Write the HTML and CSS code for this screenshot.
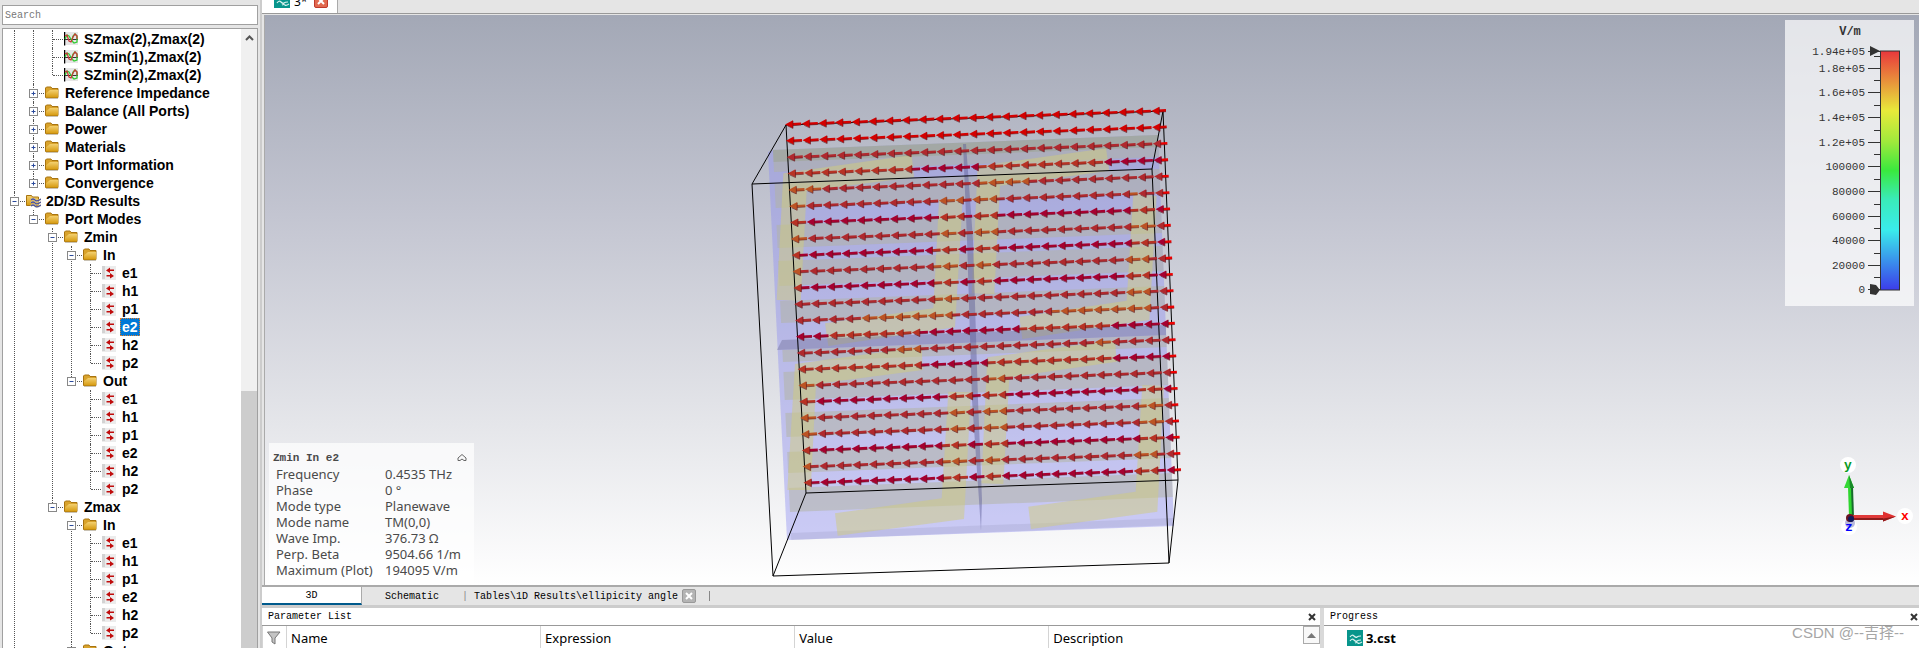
FILE: index.html
```html
<!DOCTYPE html>
<html lang="en">
  <head>
    <meta charset="UTF-8" />
    <meta name="viewport" content="width=device-width, initial-scale=1.0" />
    <title>3.cst</title>
    <link rel="stylesheet" href="styles.css">
  </head>
  <body>
    <svg class="defs" width="0" height="0">
      <defs>
        <linearGradient id="gold" x1="0" y1="0" x2="0" y2="1">
          <stop offset="0" stop-color="#f3d070" />
          <stop offset="1" stop-color="#d69a10" />
        </linearGradient>
        <symbol id="folder" viewBox="0 0 15 14">
          <path d="M0.5 11.5V2l1-1h4.500l1 1.500h6v9z" fill="#d9a32c" stroke="#a87410" />
          <path d="M1 11.500V7.500L5 4h8v7.500z" fill="url(#gold)" />
          <path d="M1 12.500h12" stroke="#c9c2b4" />
        </symbol>
        <symbol id="results" viewBox="0 0 15 14">
          <path d="M0.500 11.500V1.500h5l1 1.500h6v8.500z" fill="url(#gold)" stroke="#a87410" />
          <path d="M5 6q2-2 4 0t6-1M5 9q2-2 4 0t6-1M5 12q2-2 4 0t6-1" fill="none" stroke="#e9dfc0" stroke-width="2" />
          <path d="M5 6q2-2 4 0t6-1M5 9q2-2 4 0t6-1M5 12q2-2 4 0t6-1" fill="none" stroke="#4c5298" stroke-width="1.200" />
        </symbol>
        <symbol id="curve" viewBox="0 0 15 14">
          <rect x="1" width="13" height="13" fill="#e6e6e6" />
          <path d="M0.500 0v13.500" stroke="#000" stroke-width="1.500" />
          <path d="M1 7.500h13" stroke="#333" />
          <path d="M1 7l2-4 2 1 3 5 2 2 3-1V4l-2-2-2 2-1 4" fill="none" stroke="#3c3" stroke-width="1.300" />
          <path d="M1 4l2-1 2 6 2 1 2-5 2-3 2 2v3" fill="none" stroke="#c33" stroke-width="1.200" />
        </symbol>
        <symbol id="field" viewBox="0 0 15 14">
          <rect width="14" height="14" fill="#ececec" />
          <path d="M0 0h3v13H0z" fill="#d3d3d3" />
          <path d="M4 4.500l4-3v2h4V5H8v2zM12 10l-4-3v2H4.500v1.500H8v2z" fill="#c00c0c" />
        </symbol>
        <symbol id="wave" viewBox="0 0 16 16">
          <rect width="16" height="16" fill="#08958c" />
          <path d="M3 7q2-3 4-1t3 1 4-1M3 11q2-3 4-1t3 1 4-1M8 13q2-1 3 0t4-1" fill="none" stroke="#d9f2ef" stroke-width="1.200" />
        </symbol>
        <linearGradient id="ramp" x1="0" y1="0" x2="0" y2="1">
          <stop offset="0" stop-color="#e9373c" />
          <stop offset="0.250" stop-color="#e8ea3a" />
          <stop offset="0.380" stop-color="#9fe93c" />
          <stop offset="0.500" stop-color="#3ae93e" />
          <stop offset="0.620" stop-color="#3aebb8" />
          <stop offset="0.750" stop-color="#3aecec" />
          <stop offset="0.880" stop-color="#3a90ec" />
          <stop offset="1" stop-color="#3c3cea" />
        </linearGradient>
      </defs>
    </svg>

    <div class="app">
      <aside class="sidebar">
        <input class="search" type="text" placeholder="Search" aria-label="Search" />
        <div class="tree-box">
          <ul class="tree" id="tree"></ul>
          <div class="scrollbar">
            <svg width="9" height="6" viewBox="0 0 9 6"><path d="M1 5l3.500-3.500L8 5" fill="none" stroke="#555" stroke-width="2" /></svg>
            <div class="thumb"></div>
          </div>
        </div>
      </aside>

      <main class="main">
        <div class="doc-tabs">
          <div class="doc-tab">
            <svg width="16" height="16"><use href="#wave" /></svg>
            <span>3*</span>
            <button class="close-red" aria-label="Close">
              <svg width="8" height="8" viewBox="0 0 8 8"><path d="M1 1l6 6M7 1L1 7" stroke="#fff" stroke-width="2" /></svg>
            </button>
          </div>
        </div>

        <section class="viewport">
          <svg class="scene" id="scene" width="440" height="485" viewBox="745 100 440 485"></svg>

          <div class="info">
            <div class="info-head">
              <h2>Zmin In e2</h2>
              <button class="collapse" aria-label="Collapse">
                <svg width="10" height="8" viewBox="0 0 10 8"><path d="M1 4l4-3.500L9 4v2.500H7L5 5 3 6.500H1z" fill="none" stroke="#666" /></svg>
              </button>
            </div>
            <table>
              <tr><td>Frequency</td><td>0.4535 THz</td></tr>
              <tr><td>Phase</td><td>0 °</td></tr>
              <tr><td>Mode type</td><td>Planewave</td></tr>
              <tr><td>Mode name</td><td>TM(0,0)</td></tr>
              <tr><td>Wave Imp.</td><td>376.73 Ω</td></tr>
              <tr><td>Perp. Beta</td><td>9504.66 1/m</td></tr>
              <tr><td>Maximum (Plot)</td><td>194095 V/m</td></tr>
            </table>
          </div>

          <svg class="legend" id="legend" width="129" height="286" viewBox="0 0 129 286">
            <text class="unit" x="65" y="15">V/m</text>
            <rect x="95.500" y="31" width="19" height="239" fill="url(#ramp)" stroke="#333" />
            <path d="M85 26l10 5-10 5z" fill="#333" />
            <path d="M85 264l6 1 4 5-4 5-6-1z" fill="#333" />
          </svg>

          <svg class="axes" width="80" height="90" viewBox="1835 450 80 90">
            <circle cx="1848" cy="466" r="8" fill="#fff" />
            <circle cx="1905" cy="517" r="8" fill="#fff" />
            <circle cx="1849" cy="528" r="8" fill="#fff" />
            <path d="M1848 488h4l1 30h-4z" fill="#2fd62f" />
            <path d="M1851 488h2l1 30h-2z" fill="#176b2c" />
            <path d="M1849 476l5 13h-10z" fill="#35d835" />
            <path d="M1849 476l5 13h-4z" fill="#188a28" />
            <path d="M1853 516h30v5h-30z" fill="#e03a3a" />
            <path d="M1853 519h30v2h-30z" fill="#8c1c1c" />
            <path d="M1896 517.500l-13-5v10z" fill="#e03030" />
            <path d="M1896 517.500l-13 2v3z" fill="#8c1c1c" />
            <circle cx="1850" cy="524" r="5" fill="#b9b9dc" />
            <circle cx="1850" cy="519" r="4" fill="#6b1420" />
            <circle cx="1851" cy="520" r="3" fill="#101a5c" />
            <text x="1848" y="470" fill="#0a9a1e">y</text>
            <text x="1905" y="521" fill="#f00">x</text>
            <text x="1849" y="532" fill="#00f">z</text>
          </svg>
        </section>

        <nav class="view-tabs">
          <button class="view-tab active">3D</button>
          <button class="view-tab">Schematic</button>
          <button class="view-tab wide">Tables\1D Results\ellipicity angle</button>
          <button class="close-gray" aria-label="Close">
            <svg width="8" height="8" viewBox="0 0 8 8"><path d="M1 1l6 6M7 1L1 7" stroke="#fff" stroke-width="2" /></svg>
          </button>
          <span class="bar"></span>
        </nav>

        <div class="docks">
          <section class="dock params">
            <header>
              <span>Parameter List</span>
              <button class="x" aria-label="Close"><svg width="8" height="8" viewBox="0 0 8 8"><path d="M1 1l6 6M7 1L1 7" stroke="#333" stroke-width="2" /></svg></button>
            </header>
            <div class="dock-body">
              <div class="grid">
                <table>
                  <tr>
                    <th class="filter">
                      <svg width="14" height="14" viewBox="0 0 14 14"><path d="M0.500 1h12.500L8 7v6l-3-2V7z" fill="#c4c4c4" stroke="#777" /></svg>
                    </th>
                    <th>Name</th>
                    <th>Expression</th>
                    <th>Value</th>
                    <th>Description</th>
                  </tr>
                </table>
              </div>
              <div class="scroll-up">
                <svg width="9" height="5" viewBox="0 0 9 5"><path d="M0 5l4.500-5L9 5z" fill="#777" /></svg>
              </div>
            </div>
          </section>
          <section class="dock progress">
            <header>
              <span>Progress</span>
              <button class="x" aria-label="Close"><svg width="8" height="8" viewBox="0 0 8 8"><path d="M1 1l6 6M7 1L1 7" stroke="#333" stroke-width="2" /></svg></button>
            </header>
            <div class="dock-body job">
              <svg width="16" height="16"><use href="#wave" /></svg>
              <b>3.cst</b>
            </div>
          </section>
        </div>
      </main>
    </div>
    <div class="watermark">CSDN @--吉择--</div>

    <script src="app.js"></script>
  </body>
</html>
```
FILE: styles.css
```css
* {
  box-sizing: border-box;
}
body {
  margin: 0;
  background-color: #e5e5e5;
  color: #000;
  font-family: "Noto Sans", "Open Sans", sans-serif;
  font-size: 13px;
}
button {
  padding: 0;
  border: none;
  background: none;
  font: inherit;
  color: inherit;
}
svg {
  display: block;
  flex: none;
}
.defs {
  position: absolute;
}
.app {
  display: flex;
  height: 100vh;
  overflow: hidden;
}

/* navigation tree */
.sidebar {
  display: flex;
  flex-direction: column;
  flex: none;
  width: 262px;
  padding: 5px 2px 0 2px;
  gap: 3px;
  border-right: 2px solid #ccc;
}
.search {
  width: 100%;
  height: 20px;
  padding: 0 2px;
  border: 1px solid #a0a0a0;
  background-color: #fff;
  font-family: "Liberation Mono", monospace;
  font-size: 10px;
}
.search::placeholder {
  color: #777;
  opacity: 1;
}
.tree-box {
  display: flex;
  flex: 1;
  min-height: 0;
  border: 1px solid #a0a0a0;
  border-bottom: none;
  background-color: #fff;
}
.tree-box .tree {
  flex: 1;
  padding-top: 1px;
  overflow: hidden;
}
.tree,
.tree ul {
  margin: 0;
  padding: 0;
  list-style: none;
}
.tree ul {
  padding-left: 19px;
}
.tree li {
  position: relative;
}
.tree li::before {
  content: "";
  position: absolute;
  left: 11px;
  top: 0;
  bottom: 0;
  border-left: 1px dotted #555;
}
.tree li.last::before {
  bottom: auto;
  height: 9px;
}
.row {
  position: relative;
  display: flex;
  align-items: center;
  gap: 3px;
  height: 18px;
  padding-left: 23px;
  font: bold 14px "Liberation Sans", Arial, sans-serif;
  white-space: nowrap;
}
.row::before {
  content: "";
  position: absolute;
  left: 12px;
  top: 9px;
  width: 10px;
  border-top: 1px dotted #555;
}
.row span {
  padding: 0 2px;
  line-height: 18px;
}
.row.selected span {
  background-color: #0078d7;
  color: #fff;
  outline: 1px dotted #e08030;
  outline-offset: -1px;
}
.toggle {
  position: absolute;
  left: 7px;
  top: 5px;
}
.scrollbar {
  flex: none;
  display: flex;
  flex-direction: column;
  align-items: center;
  width: 16px;
  padding-top: 6px;
  background-color: #f0f0f0;
}
.thumb {
  width: 100%;
  height: 42%;
  margin-top: auto;
  background-color: #cdcdcd;
}

/* work area */
.main {
  display: flex;
  flex-direction: column;
  flex: 1;
  min-width: 0;
}
.doc-tabs {
  flex: none;
  height: 14px;
  border-bottom: 1px solid #999;
}
.doc-tab {
  display: flex;
  align-items: flex-end;
  gap: 4px;
  width: 76px;
  height: 13px;
  padding: 0 0 5px 12px;
  overflow: hidden;
  border-right: 1px solid #aaa;
  background-color: #fff;
}
.doc-tab span {
  width: 16px;
  font-size: 12px;
  line-height: 12px;
}
.close-red,
.close-gray {
  display: flex;
  align-items: center;
  justify-content: center;
  flex: none;
  width: 14px;
  height: 14px;
  border: 1px solid #c0392b;
  border-radius: 2px;
  background-color: #e2694f;
}
.close-gray {
  border-color: #999;
  background-color: #b4b4b4;
}
.viewport {
  position: relative;
  flex: 1;
  min-height: 0;
  margin-top: 1px;
  margin-left: 2px;
  border-left: 1px solid #aaa;
  background: linear-gradient(#a3a8b6, #c3c5d1 35%, #e5e6ea 72%, #fff);
}
.scene {
  position: absolute;
  left: 480px;
  top: 85px;
}
.info {
  position: absolute;
  left: 4px;
  bottom: 1px;
  width: 205px;
  height: 141px;
  padding: 6px 7px 0 4px;
  background-color: rgba(255, 255, 255, 0.7);
  color: #4a4a4a;
}
.info-head {
  display: flex;
  align-items: center;
  justify-content: space-between;
  height: 17px;
}
.info h2 {
  margin: 0;
  font: bold 11px "Liberation Mono", monospace;
}
.info table {
  border-collapse: collapse;
  font: 13px/16px "Noto Sans", "Open Sans", sans-serif;
}
.info td {
  padding: 0 0 0 3px;
  white-space: nowrap;
}
.info td:first-child {
  width: 109px;
}
.legend {
  position: absolute;
  right: 5px;
  top: 5px;
  background-color: rgba(255, 255, 255, 0.7);
}
.legend text {
  fill: #333;
  font: 11px "Liberation Mono", monospace;
  text-anchor: end;
}
.legend .unit {
  font-size: 12px;
  font-weight: bold;
  text-anchor: middle;
}
.axes {
  position: absolute;
  right: 4px;
  bottom: 46px;
}
.axes text {
  font: bold 13px "Liberation Mono", monospace;
  text-anchor: middle;
}
.view-tabs {
  display: flex;
  align-items: center;
  flex: none;
  height: 23px;
  border-top: 2px solid #aaa;
  border-bottom: 3px solid #ccc;
  font: 10px "Liberation Mono", monospace;
}
.view-tab {
  width: 100px;
  height: 18px;
}
.view-tab.active {
  border-right: 1px solid #aaa;
  border-bottom: 2px solid #005a8c;
  background-color: #fff;
}
.view-tab.wide {
  width: auto;
  margin-right: 4px;
}
.view-tab.wide::before {
  content: "|";
  margin-right: 6px;
  color: #888;
}
.bar {
  height: 10px;
  margin-left: 13px;
  border-left: 1px solid #888;
}

/* bottom docks */
.docks {
  display: flex;
  flex: none;
  gap: 4px;
  height: 40px;
  background-color: #d9d9d9;
}
.dock {
  display: flex;
  flex-direction: column;
  background-color: #fff;
}
.params {
  flex: 64;
}
.progress {
  flex: 36;
}
.dock header {
  display: flex;
  align-items: center;
  justify-content: space-between;
  height: 18px;
  padding: 0 4px 0 6px;
  border-bottom: 1px solid #999;
  font: 10px "Liberation Mono", monospace;
}
.progress header {
  padding-right: 1px;
}
.dock-body {
  display: flex;
  flex: 1;
}
.grid {
  flex: 1;
}
.grid table {
  width: 100%;
  height: 100%;
  table-layout: fixed;
  border-collapse: collapse;
}
.grid th {
  padding: 2px 4px 0;
  border-left: 1px solid #d4d4d4;
  font-weight: normal;
  font-size: 13px;
  line-height: 18px;
  text-align: left;
}
.grid .filter {
  width: 24px;
}
.scroll-up {
  display: flex;
  justify-content: center;
  width: 17px;
  height: 18px;
  padding-top: 6px;
  border: 1px solid #aaa;
  background-color: #f8f8f8;
}
.job {
  align-items: center;
  gap: 3px;
  padding-top: 2px;
  padding-left: 23px;
}
.watermark {
  position: absolute;
  right: 15px;
  bottom: 6px;
  color: #a6a6a6;
  font: 15px "Liberation Sans", "Noto Sans CJK SC", sans-serif;
}
```
FILE: app.js
```js
const modes = ["e1", "h1", "p1", "e2", "h2", "p2"];
const leaf = (text) => ({ text, icon: "field" });
const folder = (text, kids) => ({ text, icon: "folder", kids });

// items without text are scrolled out above the first visible row
const tree = [
  { kids: [
    { kids: ["SZmax(2),Zmax(2)", "SZmin(1),Zmax(2)", "SZmin(2),Zmax(2)"].map((text) => ({ text, icon: "curve" })) },
    ...["Reference Impedance", "Balance (All Ports)", "Power", "Materials", "Port Information", "Convergence"].map((t) => folder(t, [])),
  ] },
  { text: "2D/3D Results", icon: "results", kids: [
    folder("Port Modes", [
      folder("Zmin", [folder("In", modes.map(leaf)), folder("Out", modes.map(leaf))]),
      folder("Zmax", [folder("In", modes.map(leaf)), folder("Out", modes.map(leaf))]),
    ]),
  ] },
];

let selectedDone = false;
function renderItems(items, top) {
  return items.map((item, i) => {
    const last = i === items.length - 1 && !top;
    let html = `<li class="${last ? "last" : ""}">`;
    if (item.text) {
      const selected = item.text === "e2" && !selectedDone;
      if (selected) selectedDone = true;
      html += `<div class="row ${selected ? "selected" : ""}">`;
      if (item.kids) {
        const plus = item.kids.length ? "" : "M4.5 2.5v4";
        html += `<svg class="toggle" width="9" height="9"><rect x=".5" y=".5" width="8" height="8" fill="#fff" stroke="#888"/><path d="M2.5 4.500h4${plus}" stroke="#2a4a9c"/></svg>`;
      }
      html += `<svg width="15" height="14"><use href="#${item.icon}"/></svg><span>${item.text}</span></div>`;
    }
    if (item.kids && item.kids.length) html += `<ul>${renderItems(item.kids)}</ul>`;
    return html + "</li>";
  }).join("");
}
document.getElementById("tree").innerHTML = renderItems(tree, true);

// legend ticks
const labels = [
  [31, "1.94e+05"], [48, "1.8e+05"], [72, "1.6e+05"], [97, "1.4e+05"], [122, "1.2e+05"],
  [146, "100000"], [171, "80000"], [196, "60000"], [220, "40000"], [245, "20000"], [269, "0"],
];
let ticks = "";
labels.forEach(([y, text], i) => {
  ticks += `<text x="80" y="${y + 4}">${text}</text><path d="M83 ${y}.5h12" stroke="#333"/>`;
  if (i > 0) ticks += `<path d="M89 ${y - 12}.5h6" stroke="#333"/>`;
});
document.getElementById("legend").insertAdjacentHTML("beforeend", ticks);

// 3D scene
const poly = (pts, fill) => `<polygon points="${pts.map((p) => p.join()).join(" ")}" fill="${fill}"/>`;
const leftX = (y) => 773 + (y - 150) * 0.047;
const rightX = (y) => 1158 + (y - 135) * 0.041;
const stripe = (a, b, fill) =>
  poly([[leftX(a), a], [rightX(a - 15), a - 15], [rightX(b - 15), b - 15], [leftX(b), b]], fill);

let out = poly([[768, 152], [773, 150], [1158, 135], [1174, 526], [787, 540]], "rgba(140,140,240,.42)");

const blues = [[172, 184], [208, 225], [248, 261], [286, 301], [323, 350], [362, 372], [400, 413], [437, 452], [473, 488], [512, 533]];
let y0 = 150;
blues.forEach(([a, b]) => {
  out += stripe(y0, a, "rgba(178,180,160,.5)");
  y0 = b;
});
out += stripe(150, 162, "rgba(150,160,130,.4)");
out += stripe(533, 540, "rgba(160,160,200,.3)");

const shift = (pts, x, y) => pts.map((p) => [x + p[0] / 3, y + p[1] / 3]);
const metal = [
  shift([[130, 250], [515, 195], [522, 262], [200, 302], [182, 632], [110, 630]], 740, 90),
  shift([[597, 332], [668, 330], [645, 712], [265, 768], [255, 700], [580, 655]], 740, 90),
  shift([[53, 228], [438, 175], [448, 242], [120, 287], [103, 612], [35, 610]], 960, 90),
  shift([[520, 310], [590, 318], [568, 690], [187, 747], [178, 680], [500, 632]], 960, 90),
  shift([[165, 72], [545, 20], [548, 90], [228, 132], [212, 450], [142, 450]], 740, 340),
  shift([[625, 155], [693, 157], [672, 537], [293, 587], [285, 520], [605, 475]], 740, 340),
  shift([[82, 52], [465, 0], [470, 65], [148, 112], [130, 432], [64, 430]], 960, 340),
  shift([[547, 135], [612, 137], [592, 515], [213, 567], [205, 500], [527, 455]], 960, 340),
];
metal.forEach((m) => (out += poly(m, "rgba(208,204,125,.5)")));

// gaps between the four cells
out += poly([[782, 340], [1166, 325], [1166, 335], [777, 350]], "rgba(110,110,150,.42)");
out += poly([[963, 144], [966, 144], [973, 240], [978, 400], [982, 500], [981, 531], [979, 500], [972, 400], [967, 240]], "rgba(90,90,150,.45)");

function inside(x, y, pts) {
  let hit = false;
  for (let i = 0, j = pts.length - 1; i < pts.length; j = i++) {
    const [xi, yi] = pts[i];
    const [xj, yj] = pts[j];
    if (yi > y !== yj > y && x < ((xj - xi) * (y - yi)) / (yj - yi) + xi) hit = !hit;
  }
  return hit;
}
const blueRows = [3, 6, 8, 10, 13, 15, 17, 20, 22];
function color(x, y, row) {
  if (row < 2) return "#d40000";
  if (x > rightX(y) + 1) return "#ee0000";
  const onMetal = metal.some((m) => inside(x, y, m));
  if (blueRows.includes(row)) return onMetal ? "#b83224" : "#a60030";
  return onMetal ? "#bc5424" : "#b0292e";
}

const wires = [
  "M786 125L1163 111M786 125L806 493L1178 480L1163 111",
  "M752 184L1152 169L1169 563L773 576Z",
  "M786 125L752 184M1163 111L1152 169M806 493L773 576M1178 480L1169 563",
];
out += `<path d="${wires.join("")}" fill="none" stroke="#000" stroke-width="1"/>`;

for (let r = 0; r < 23; r++) {
  const xl = 785.5 + 0.84 * r;
  const yl = 124.4 + 16.4 * r - 0.005 * r * r;
  const xr = 1166 + 0.68 * r;
  const step = (xr - xl) / 22.85;
  const slope = -(14 - 0.03 * r) / (xr - xl);
  for (let i = 0; i < 23; i++) {
    const x = xl + i * step;
    const y = yl + slope * (x - xl);
    const end = Math.min(x + step - 1, xr);
    const ye = y + slope * (end - x);
    out += `<path d="M${x + 6} ${y}L${end} ${ye}" stroke="${color(x + 12, y, r)}" stroke-width="2.6"/>`;
    out += `<path d="M${x + 7} ${y + 1.3}L${end} ${ye + 1.3}" stroke="#5c1018" stroke-width=".5"/>`;
    out += `<path d="M${x - 0.5} ${y}l8 -4.200v8z" fill="${color(x + 5, y, r)}"/>`;
    out += `<path d="M${x + 2} ${y + 1.500}l5.500 2.500v-7.500" fill="none" stroke="#5c1018" stroke-width=".6"/>`;
  }
}
document.getElementById("scene").innerHTML = out;
```
